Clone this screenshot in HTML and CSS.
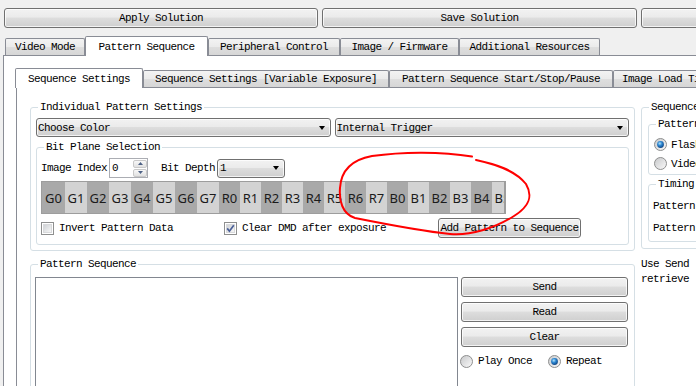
FILE: index.html
```html
<!DOCTYPE html>
<html>
<head>
<meta charset="utf-8">
<link rel="stylesheet" href="styles.css">
</head>
<body>
<svg class="defs" width="0" height="0" aria-hidden="true">
  <defs>
    <linearGradient id="boxfill" x1="0" y1="0" x2="1" y2="1"><stop offset="0" stop-color="#cdd0d4"/><stop offset="1" stop-color="#f9f9f9"/></linearGradient>
    <linearGradient id="radfill" x1="0" y1="0" x2="1" y2="1"><stop offset="0" stop-color="#c6c7c9"/><stop offset="1" stop-color="#fbfbfb"/></linearGradient>
    <radialGradient id="dot" cx="0.4" cy="0.35" r="0.7"><stop offset="0" stop-color="#b6e4fb"/><stop offset="0.45" stop-color="#2b86d1"/><stop offset="1" stop-color="#0f3f7c"/></radialGradient>
  </defs>
</svg>
<div class="app">
  <div class="toolbar">
    <button class="btn btn-apply">Apply Solution</button>
    <button class="btn btn-save">Save Solution</button>
    <button class="btn btn-more"></button>
  </div>
  <div class="tabs outer-tabs">
    <div class="tab t-video">Video Mode</div>
    <div class="tab sel t-pattern">Pattern Sequence</div>
    <div class="tab t-periph">Peripheral Control</div>
    <div class="tab t-image">Image / Firmware</div>
    <div class="tab t-add">Additional Resources</div>
  </div>
  <div class="outer-panel">
    <div class="tabs inner-tabs">
      <div class="tab sel t-seq">Sequence Settings</div>
      <div class="tab t-var">Sequence Settings [Variable Exposure]</div>
      <div class="tab t-start">Pattern Sequence Start/Stop/Pause</div>
      <div class="tab t-load">Image Load Timing</div>
    </div>
    <div class="inner-panel">
      <div class="left-col">
        <div class="group g-individual">
          <span class="group-title">Individual Pattern Settings</span>
          <div class="combo-row">
            <div class="combo c-wide"><span>Choose Color</span><i class="arrow"></i></div>
            <div class="combo c-wide"><span>Internal Trigger</span><i class="arrow"></i></div>
          </div>
          <div class="group g-bitplane">
            <span class="group-title">Bit Plane Selection</span>
            <div class="index-row">
              <span>Image Index</span>
              <div class="spin">
                <span class="spin-val">0</span>
                <div class="spin-btns">
                  <span class="spin-btn"><svg width="5" height="3" viewBox="0 0 5 3"><path d="M0 3 L2.5 0 L5 3Z" fill="#4d6185"/></svg></span>
                  <span class="spin-btn"><svg width="5" height="3" viewBox="0 0 5 3"><path d="M0 0 L5 0 L2.5 3Z" fill="#4d6185"/></svg></span>
                </div>
              </div>
              <span class="lbl-depth">Bit Depth</span>
              <div class="combo c-depth"><span>1</span><i class="arrow"></i></div>
            </div>
            <div class="strip">
              <span class="cell dk w23">G0</span>
              <span class="cell w22">G1</span>
              <span class="cell dk w22">G2</span>
              <span class="cell w22">G3</span>
              <span class="cell dk w22">G4</span>
              <span class="cell w22">G5</span>
              <span class="cell dk w22">G6</span>
              <span class="cell w22">G7</span>
              <span class="cell dk">R0</span>
              <span class="cell">R1</span>
              <span class="cell dk">R2</span>
              <span class="cell">R3</span>
              <span class="cell dk">R4</span>
              <span class="cell">R5</span>
              <span class="cell dk">R6</span>
              <span class="cell">R7</span>
              <span class="cell dk">B0</span>
              <span class="cell">B1</span>
              <span class="cell dk">B2</span>
              <span class="cell">B3</span>
              <span class="cell dk">B4</span>
              <span class="cell">B5</span>
            </div>
            <div class="check-row">
              <label class="chk chk-invert">
                <svg width="13" height="13" viewBox="0 0 13 13"><rect x="0.5" y="0.5" width="12" height="12" fill="#fff" stroke="#8e8f8f"/><rect x="2.5" y="2.5" width="8" height="8" fill="url(#boxfill)" stroke="#d8d9db"/></svg>
                Invert Pattern Data
              </label>
              <label class="chk chk-clear">
                <svg width="13" height="13" viewBox="0 0 13 13"><rect x="0.5" y="0.5" width="12" height="12" fill="#fff" stroke="#8e8f8f"/><rect x="2.5" y="2.5" width="8" height="8" fill="url(#boxfill)" stroke="#d8d9db"/><path d="M3.2 6.4 L5.4 9.2 L9.8 3.2" fill="none" stroke="#4a5f97" stroke-width="1.7"/></svg>
                Clear DMD after exposure
              </label>
              <button class="btn btn-add">Add Pattern to Sequence</button>
            </div>
          </div>
        </div>
        <div class="group g-sequence">
          <span class="group-title">Pattern Sequence</span>
          <div class="seq-body">
            <div class="listbox"></div>
            <div class="seq-actions">
              <button class="btn">Send</button>
              <button class="btn">Read</button>
              <button class="btn">Clear</button>
              <div class="radio-row">
                <label class="opt opt-once">
                  <svg width="13" height="13" viewBox="0 0 13 13"><circle cx="6.5" cy="6.5" r="6" fill="url(#radfill)" stroke="#8e8f8f"/></svg>
                  Play Once
                </label>
                <label class="opt">
                  <svg width="13" height="13" viewBox="0 0 13 13"><circle cx="6.5" cy="6.5" r="6" fill="url(#radfill)" stroke="#8e8f8f"/><circle cx="6.5" cy="6.5" r="3.4" fill="url(#dot)"/></svg>
                  Repeat
                </label>
              </div>
            </div>
          </div>
        </div>
      </div>
      <div class="right-col">
        <div class="group g-seqset">
          <span class="group-title">Sequence Settings</span>
          <div class="group g-mode">
            <span class="group-title">Pattern Display Mode</span>
            <label class="opt-row">
              <svg width="13" height="13" viewBox="0 0 13 13"><circle cx="6.5" cy="6.5" r="6" fill="url(#radfill)" stroke="#8e8f8f"/><circle cx="6.5" cy="6.5" r="3.4" fill="url(#dot)"/></svg>
              Flash
            </label>
            <label class="opt-row">
              <svg width="13" height="13" viewBox="0 0 13 13"><circle cx="6.5" cy="6.5" r="6" fill="url(#radfill)" stroke="#8e8f8f"/></svg>
              Video
            </label>
          </div>
          <div class="group g-timing">
            <span class="group-title">Timing</span>
            <div class="trow">Pattern Exposure</div>
            <div class="trow">Pattern Period</div>
          </div>
        </div>
        <div class="hint">Use Send<br>retrieve</div>
      </div>
    </div>
  </div>
  <svg class="annotation" width="696" height="386" viewBox="0 0 696 386">
    <path d="M476 160 C495 164 515 170 526 184 C533 196 530 206 514 216 C495 228 470 236 450 234 C420 231 385 224 355 218 C342 214 339 200 340 188 C341 172 350 160 372 156 C400 152 440 151 472 156.5" fill="none" stroke="#f00" stroke-width="2" stroke-linecap="round"/>
  </svg>
</div>
</body>
</html>
```
FILE: styles.css
```css
* { box-sizing: border-box; }
html, body { margin: 0; padding: 0; }
body {
  background: #f0f0f0;
  font-family: "Liberation Mono", "DejaVu Sans Mono", monospace;
  font-size: 11px;
  line-height: 12px;
  letter-spacing: -0.6px;
  color: #000;
}
.defs { position: absolute; width: 0; height: 0; overflow: hidden; }
.app { position: relative; width: 696px; height: 386px; overflow: hidden; }

.toolbar { display: flex; gap: 4px; padding: 8px 0 0 4px; height: 28px; }
.btn {
  flex: none;
  height: 20px;
  margin: 0;
  padding: 0;
  border: 1px solid #707070;
  border-radius: 3px;
  background: linear-gradient(#f2f2f2 0%, #ebebeb 45%, #dddddd 50%, #cfcfcf 100%);
  box-shadow: inset 0 0 0 1px rgba(255, 255, 255, 0.75);
  font: inherit;
  letter-spacing: inherit;
  color: #000;
  display: flex;
  align-items: center;
  justify-content: center;
  white-space: nowrap;
}
.btn-apply { width: 314px; }
.btn-save { width: 315px; }
.btn-more { width: 120px; }

.tabs { display: flex; align-items: flex-end; height: 19px; }
.outer-tabs { margin-top: 8px; padding-left: 5px; }
.tab {
  flex: none;
  height: 17px;
  border: 1px solid #898c95;
  border-bottom: 0;
  border-radius: 2px 2px 0 0;
  background: linear-gradient(#f3f3f3 0%, #ebebeb 48%, #dedede 52%, #d6d6d6 100%);
  display: flex;
  align-items: center;
  justify-content: center;
  white-space: nowrap;
}
.tab.sel { height: 20px; margin-bottom: -1px; background: #fff; position: relative; z-index: 1; }
.t-video { width: 80px; }
.t-pattern { width: 123px; }
.t-periph { width: 132px; }
.t-image { width: 119px; }
.t-add { width: 141px; }
.t-seq { width: 128px; margin-left: -1px; }
.t-var { width: 246px; }
.t-start { width: 224px; }
.t-load { width: 120px; }

.outer-panel {
  margin-left: 3px;
  height: 331px;
  border-top: 1px solid #898c95;
  border-left: 1px solid #898c95;
  background: #fff;
  padding: 12px 0 0 12px;
}
.inner-panel {
  height: 299px;
  border-top: 1px solid #898c95;
  border-left: 1px solid #898c95;
  background: #fff;
  padding: 19px 0 0 13px;
  display: flex;
  gap: 6px;
  align-items: flex-start;
}

.group { position: relative; border: 1px solid #d5dfe5; border-radius: 3px; background: #fff; }
.group-title {
  position: absolute;
  top: -7px;
  left: 7px;
  padding: 0 2px;
  background: #fff;
  line-height: 12px;
  white-space: nowrap;
}

.left-col { flex: none; width: 605px; }
.g-individual { padding: 10px 5px 5px 5px; }
.combo-row { display: flex; gap: 4px; }
.combo {
  flex: none;
  height: 19px;
  border: 1px solid #707070;
  border-radius: 3px;
  background: linear-gradient(#f2f2f2 0%, #ebebeb 45%, #dddddd 50%, #cfcfcf 100%);
  box-shadow: inset 0 0 0 1px rgba(255, 255, 255, 0.75);
  display: flex;
  align-items: center;
  justify-content: space-between;
  padding: 0 5px 0 1px;
  white-space: nowrap;
}
.c-wide { flex: 1; }
.arrow {
  width: 0;
  height: 0;
  border-left: 3.5px solid transparent;
  border-right: 3.5px solid transparent;
  border-top: 4px solid #000;
}

.g-bitplane { margin-top: 10px; padding: 10px 4px 6px 4px; }
.index-row { display: flex; align-items: center; height: 20px; white-space: nowrap; }
.spin {
  margin-left: 2px;
  width: 39px;
  height: 20px;
  border: 1px solid #abadb3;
  background: #fff;
  display: flex;
  justify-content: space-between;
  align-items: center;
  padding-left: 2px;
}
.spin-btns { display: flex; flex-direction: column; gap: 1px; }
.spin-btn {
  width: 14px;
  height: 8px;
  border: 1px solid #c9c9c9;
  border-radius: 2px;
  background: linear-gradient(#f8f8f8, #e1e1e1);
  display: flex;
  align-items: center;
  justify-content: center;
}
.spin-btn svg { display: block; }
.lbl-depth { margin-left: 13px; }
.c-depth { margin-left: 2px; width: 68px; padding: 0 5px 0 2px; }

.strip {
  margin-top: 3px;
  width: 465px;
  height: 33px;
  border: 1px solid #9d9d9d;
  border-right-width: 2px;
  display: flex;
  overflow: hidden;
  font-family: "Noto Sans", "DejaVu Sans", sans-serif;
  font-size: 13px;
  line-height: 16px;
  letter-spacing: 0;
  color: #1b1b1b;
}
.cell {
  flex: none;
  width: 21px;
  display: flex;
  align-items: center;
  justify-content: center;
  background: #d3d3d3;
}
.cell.dk { background: #a9a9a9; }
.cell.w23 { width: 23px; }
.cell.w22 { width: 22px; }

.check-row { margin-top: 4px; display: flex; align-items: center; height: 20px; }
.chk { flex: none; display: flex; align-items: center; gap: 5px; white-space: nowrap; }
.chk svg, .opt svg, .opt-row svg { flex: none; display: block; }
.chk-invert { width: 183px; }
.chk-clear { width: 214px; }
.btn-add { width: 143px; }

.g-sequence { margin-top: 13px; height: 140px; padding: 12px 6px 0 4px; }
.seq-body { display: flex; gap: 3px; align-items: flex-start; }
.listbox { flex: none; width: 423px; height: 130px; border: 1px solid #828790; background: #fff; }
.seq-actions { flex: none; width: 167px; display: flex; flex-direction: column; gap: 5px; }
.seq-actions .btn { width: 167px; }
.radio-row { margin-top: 2px; margin-left: -1px; height: 14px; display: flex; align-items: center; }
.opt { flex: none; display: flex; align-items: center; gap: 5px; white-space: nowrap; }
.opt-once { width: 88px; }

.right-col { flex: none; width: 200px; }
.g-seqset { padding: 16px 6px 6px 6px; }
.g-mode { padding: 10px 5px 1px 5px; }
.opt-row { height: 19px; display: flex; align-items: center; gap: 4px; white-space: nowrap; }
.g-timing { margin-top: 9px; padding: 10px 4px 2px 4px; }
.trow { height: 22px; display: flex; align-items: center; white-space: nowrap; }
.hint { margin-top: 8px; line-height: 15px; white-space: nowrap; }

.annotation { position: absolute; left: 0; top: 0; pointer-events: none; }
```
